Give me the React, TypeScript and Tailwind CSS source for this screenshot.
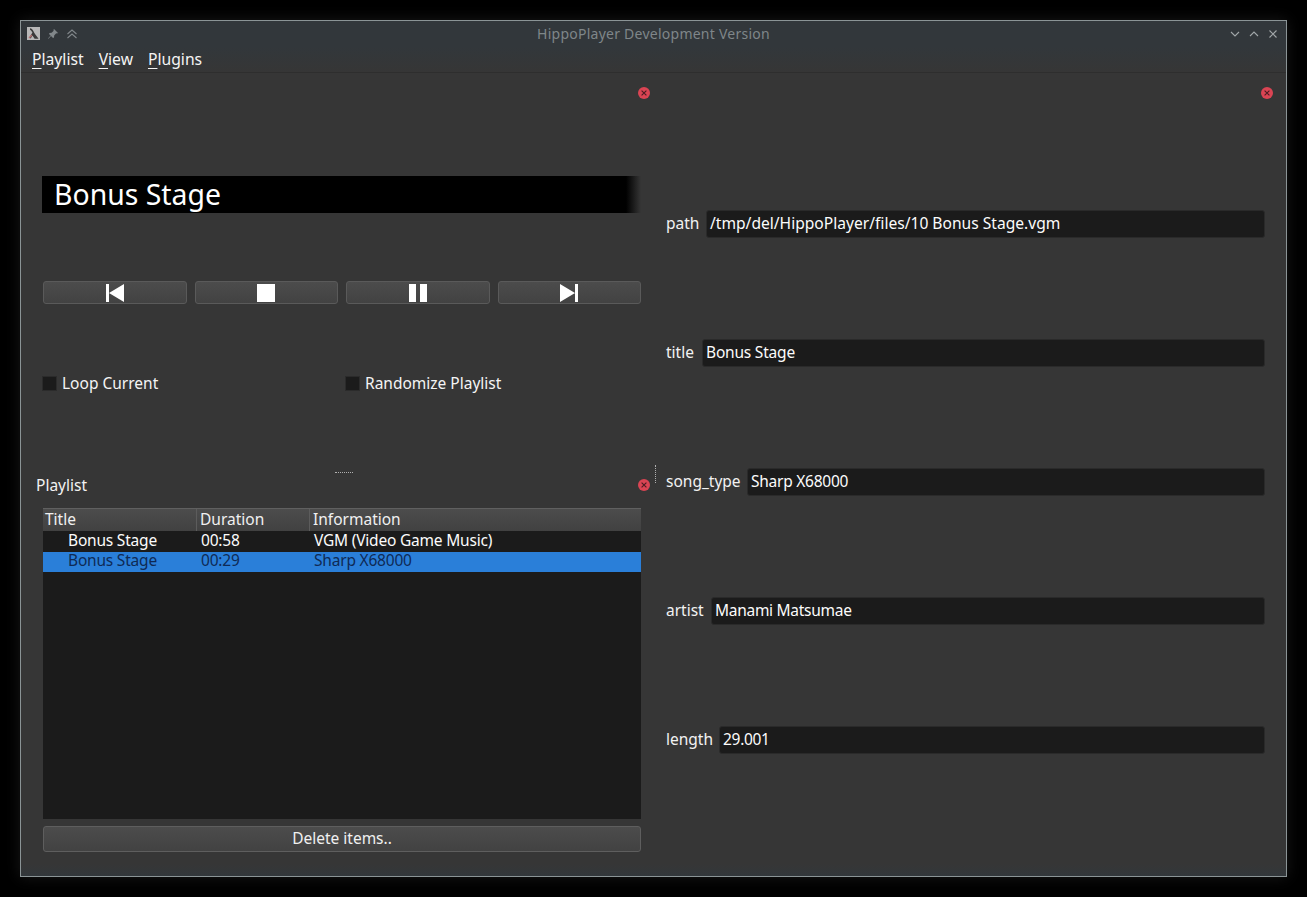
import React from "react";

const font = { fontFamily: '"Noto Sans", "Open Sans", sans-serif' };

function CloseDot({ className }: { className: string }) {
  return (
    <svg className={className} width="12" height="12" viewBox="0 0 12 12">
      <circle cx="6" cy="6" r="6" fill="#da4453" />
      <path d="M3.6 3.6 8.4 8.4M8.4 3.6 3.6 8.4" stroke="#4a1c22" strokeWidth="1.1" />
    </svg>
  );
}

function TransportButton({ children }: { children: React.ReactNode }) {
  return (
    <button className="flex h-[23px] flex-1 items-center justify-center rounded-[3px] border border-[#5a5a5a] bg-gradient-to-b from-[#4c4c4c] to-[#424242]">
      {children}
    </button>
  );
}

function Check({ label }: { label: string }) {
  return (
    <div className="flex items-center gap-[5px]">
      <span className="h-[15px] w-[15px] border border-[#2b2b2b] bg-[#1b1b1b]" />
      <span className="text-[15.5px] text-[#f4f4f4]">{label}</span>
    </div>
  );
}

function Field({ label, value, w, size, first }: { label: string; value: string; w: string; size: string; first?: boolean }) {
  return (
    <div className={`flex h-[28px] items-center ${first ? "" : "mt-[101px]"}`}>
      <span className={`${w} text-[15.5px] text-[#f2f2f2]`}>{label}</span>
      <div className={`${size} flex h-[28px] flex-1 items-center rounded-[3px] border border-[#2a2a2a] bg-[#1b1b1b] pl-[3px] text-[#fcfcfc]`}>
        {value}
      </div>
    </div>
  );
}

function Row({ a, b, c, selected }: { a: string; b: string; c: string; selected?: boolean }) {
  return (
    <div className={`flex text-[15.5px] tracking-[-0.2px] ${selected ? "h-[20px] bg-[#2a7fd9] leading-[17px] text-[#0f2a55]" : "h-[21px] leading-[19px] text-[#fcfcfc]"}`}>
      <span className="w-[154px] pl-[25px]">{a}</span>
      <span className="w-[113px] pl-[4px]">{b}</span>
      <span className="pl-[4px]">{c}</span>
    </div>
  );
}

function HeaderCell({ label, w, pad }: { label: string; w: string; pad: string }) {
  return <span className={`${w} ${pad} border-r border-[#5c5c5c] leading-[20px]`}>{label}</span>;
}

export default function App() {
  return (
    <div className="h-[897px] w-[1307px] overflow-hidden bg-black pl-[20px] pt-[20px]" style={font}>
      <div className="flex h-[857px] w-[1267px] flex-col border border-[#8b9496] bg-[#363636] shadow-[0_0_14px_rgba(70,70,70,0.35)]">
        <div className="flex h-[26px] items-center bg-[#32373b] px-[6px] pb-[1px]">
          <div className="flex w-[200px] items-center gap-[6px]">
            <svg width="13" height="13" viewBox="0 0 13 13">
              <rect width="13" height="13" fill="#b8b8b8" />
              <path d="M3 2c2 0 3 3 4 5l3 4H8L5.5 7 3 11" fill="none" stroke="#3a3a3a" strokeWidth="1.6" />
              <path d="M2 11l3-3" stroke="#b47070" strokeWidth="1.5" />
            </svg>
            <svg width="12" height="12" viewBox="0 0 12 12" fill="#81878a" className="ml-[1px]">
              <path d="M7 1l4 4-1 .6-.8-.3L7.2 7.4 7 9.5 6 10 4 8l-2.5 2.8L1 10.4 3.6 7.6 2 6l.5-1 2.1-.2 2.1-2.1-.3-.8z" />
            </svg>
            <svg width="14" height="12" viewBox="0 0 14 12" fill="none" stroke="#81878a" strokeWidth="1.1">
              <path d="M2.5 6 7 2l4.5 4M2.5 10 7 6l4.5 4" />
            </svg>
          </div>
          <div className="flex-1 text-center text-[14px] tracking-[0.25px] text-[#7f8689]">HippoPlayer Development Version</div>
          <div className="flex w-[200px] items-center justify-end gap-[7px] pr-[1px]">
            <svg width="12" height="12" viewBox="0 0 12 12" fill="none" stroke="#a2a7a9" strokeWidth="1.1"><path d="M2 4l4 4 4-4" /></svg>
            <svg width="12" height="12" viewBox="0 0 12 12" fill="none" stroke="#a2a7a9" strokeWidth="1.1"><path d="M2 8l4-4 4 4" /></svg>
            <svg width="12" height="12" viewBox="0 0 12 12" fill="none" stroke="#a2a7a9" strokeWidth="1.1"><path d="M2.5 2.5l7 7M9.5 2.5l-7 7" /></svg>
          </div>
        </div>

        <div className="flex h-[26px] items-center gap-[15px] border-b border-[#2e2e2e] bg-gradient-to-b from-[#32373b] to-[#363636] pl-[11px] text-[15.7px] text-[#f4f4f4]">
          <span><span className="underline underline-offset-[3px]">P</span>laylist</span>
          <span><span className="underline underline-offset-[3px]">V</span>iew</span>
          <span><span className="underline underline-offset-[3px]">P</span>lugins</span>
        </div>

        <div className="flex flex-1">
          <div className="flex w-[634px] flex-col">
            <div className="relative h-[400px] pl-[21px] pr-[14px] pt-[103px]">
              <CloseDot className="absolute right-[5px] top-[14px]" />
              <div className="flex h-[37px] items-center bg-[linear-gradient(to_right,#000_97.5%,#363636)] pl-[12px] text-[28.4px] text-white">Bonus Stage</div>
              <div className="mt-[68px] flex gap-[8px] pl-[1px]">
                <TransportButton>
                  <svg width="18" height="18" viewBox="0 0 18 18" fill="#fff"><path d="M0 0h3v18H0zM18 0v18L3 9z" /></svg>
                </TransportButton>
                <TransportButton>
                  <span className="h-[18px] w-[18px] bg-white" />
                </TransportButton>
                <TransportButton>
                  <svg width="18" height="18" viewBox="0 0 18 18" fill="#fff"><path d="M0 0h7v18H0zM11 0h7v18h-7z" /></svg>
                </TransportButton>
                <TransportButton>
                  <svg width="18" height="18" viewBox="0 0 18 18" fill="#fff"><path d="M0 0v18L15 9zM15 0h3v18h-3z" /></svg>
                </TransportButton>
              </div>
              <div className="mt-[68px] flex">
                <div className="w-[303px]"><Check label="Loop Current" /></div>
                <Check label="Randomize Playlist" />
              </div>
              <div className="absolute bottom-0 left-[314px] h-0 w-[18px] border-t border-dotted border-[#b0b0b0]" />
            </div>

            <div className="relative flex flex-1 flex-col pl-[22px] pr-[14px]">
              <CloseDot className="absolute right-[5px] top-[6px]" />
              <div className="-ml-[7px] h-[35px] text-[15.5px] leading-[24px] text-[#f2f2f2]">Playlist</div>
              <div className="flex h-[311px] flex-col bg-[#1b1b1b]">
                <div className="flex h-[23px] border-t border-[#606060] bg-gradient-to-b from-[#4c4c4c] to-[#414141] text-[15.5px] text-[#f0f0f0]">
                  <HeaderCell label="Title" w="w-[154px]" pad="pl-[2px]" />
                  <HeaderCell label="Duration" w="w-[113px]" pad="pl-[3px]" />
                  <span className="pl-[3px] leading-[20px]">Information</span>
                </div>
                <Row a="Bonus Stage" b="00:58" c="VGM (Video Game Music)" />
                <Row a="Bonus Stage" b="00:29" c="Sharp X68000" selected />
              </div>
              <button className="mt-[7px] h-[26px] rounded-[3px] border border-[#5e5e5e] bg-gradient-to-b from-[#4c4c4c] to-[#424242] text-[15.5px] text-[#f0f0f0]">Delete items..</button>
            </div>
          </div>

          <div className="relative flex-1 pl-[11px] pr-[21px] pt-[137px]">
            <CloseDot className="absolute right-[13px] top-[14px]" />
            <div className="absolute left-0 top-[392px] h-[18px] w-0 border-l border-dotted border-[#b0b0b0]" />
            <Field first label="path" value="/tmp/del/HippoPlayer/files/10 Bonus Stage.vgm" w="w-[40px]" size="text-[15.6px]" />
            <Field label="title" value="Bonus Stage" w="w-[36px]" size="text-[15.5px] tracking-[-0.2px]" />
            <Field label="song_type" value="Sharp X68000" w="w-[81px]" size="text-[15.5px] tracking-[-0.25px]" />
            <Field label="artist" value="Manami Matsumae" w="w-[45px]" size="text-[15.5px] tracking-[-0.28px]" />
            <Field label="length" value="29.001" w="w-[53px]" size="text-[15.5px] tracking-[-0.3px]" />
          </div>
        </div>
        <div className="-mt-[12px] h-[12px] bg-gradient-to-b from-[#363636] to-[#32373b]" />
      </div>
    </div>
  );
}
